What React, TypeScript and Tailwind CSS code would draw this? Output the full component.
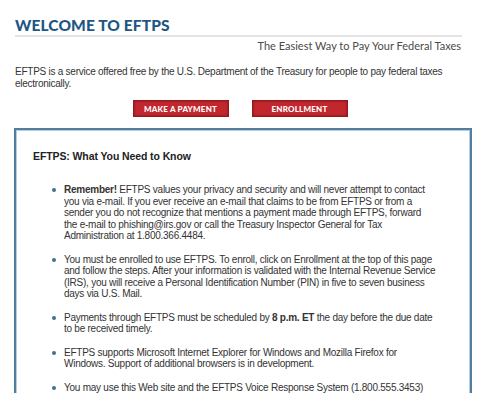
const items: string[][] = [
  [
    "EFTPS values your privacy and security and will never attempt to contact",
    "you via e-mail. If you ever receive an e-mail that claims to be from EFTPS or from a",
    "sender you do not recognize that mentions a payment made through EFTPS, forward",
    "the e-mail to phishing@irs.gov or call the Treasury Inspector General for Tax",
    "Administration at 1.800.366.4484.",
  ],
  [
    "You must be enrolled to use EFTPS. To enroll, click on Enrollment at the top of this page",
    "and follow the steps. After your information is validated with the Internal Revenue Service",
    "(IRS), you will receive a Personal Identification Number (PIN) in five to seven business",
    "days via U.S. Mail.",
  ],
  [],
  [
    "EFTPS supports Microsoft Internet Explorer for Windows and Mozilla Firefox for",
    "Windows. Support of additional browsers is in development.",
  ],
  ["You may use this Web site and the EFTPS Voice Response System (1.800.555.3453)"],
];

function Lines({ lines }: { lines: string[] }) {
  return (
    <>
      {lines.map((line, i) => (
        <span key={i} className="block">
          {line}
        </span>
      ))}
    </>
  );
}

export default function App() {
  return (
    <div className="h-[393px] w-[480px] overflow-hidden bg-white font-['Liberation_Sans',Arial,sans-serif] text-[#333]">
      <header className="pt-[17px]">
        <h1 className="pl-[15px] font-['Lato',sans-serif] text-[15.5px] font-black leading-[17px] tracking-[0.1px] text-[#1f5784]">
          WELCOME TO EFTPS
        </h1>
        <div className="ml-[15px] mt-[1px] h-[2px] w-[447px] bg-[#e4e4e4]" />
        <p className="mt-[2px] w-[461px] text-right font-['Lato',sans-serif] text-[11px] leading-[14px] text-[#4a4a4a]">
          The Easiest Way to Pay Your Federal Taxes
        </p>
      </header>

      <p className="mt-[13px] px-[15px] text-[10px] leading-[12px] tracking-[-0.25px]">
        EFTPS is a service offered free by the U.S. Department of the Treasury for people to pay federal taxes electronically.
      </p>

      <div className="mt-[10px] flex justify-center gap-[23px]">
        <button
          type="button"
          className="flex h-[17px] w-[96px] items-center justify-center border border-[#8f1a1f] bg-[#c4262e] font-['Lato',sans-serif] text-[8px] font-black tracking-[0.2px] text-white shadow-[inset_0_0_3px_rgba(0,0,0,0.35)]"
        >
          MAKE A PAYMENT
        </button>
        <button
          type="button"
          className="flex h-[17px] w-[96px] items-center justify-center border border-[#8f1a1f] bg-[#c4262e] font-['Lato',sans-serif] text-[8px] font-black tracking-[0.2px] text-white shadow-[inset_0_0_3px_rgba(0,0,0,0.35)]"
        >
          ENROLLMENT
        </button>
      </div>

      <section className="ml-[14px] mt-[11px] h-[400px] w-[458px] border-[2px] border-[#4f7f9c] px-[17px] pt-[20px] shadow-[inset_0_0_0_1px_#b7cddb]">
        <h2 className="text-[10.5px] font-bold leading-[12px] tracking-[-0.1px] text-[#222]">EFTPS: What You Need to Know</h2>
        <ul className="mt-[22px] flex flex-col gap-[12px] pl-[19px] text-[10px] leading-[11.5px] tracking-[-0.25px]">
          {items.map((lines, i) => (
            <li key={i} className="flex">
              <span className="mt-[4px] h-[4px] w-[4px] shrink-0 rounded-full bg-[#3f6f92]" />
              <span className="whitespace-nowrap pl-[8px]">
                {i === 0 && (
                  <>
                    <b>Remember!</b>{" "}
                  </>
                )}
                {i === 2 ? (
                  <>
                    <span className="block">
                      Payments through EFTPS must be scheduled by <b>8 p.m. ET</b> the day before the due date
                    </span>
                    <span className="block">to be received timely.</span>
                  </>
                ) : i === 0 ? (
                  <>
                    {lines[0]}
                    <Lines lines={lines.slice(1)} />
                  </>
                ) : (
                  <Lines lines={lines} />
                )}
              </span>
            </li>
          ))}
        </ul>
      </section>
    </div>
  );
}
